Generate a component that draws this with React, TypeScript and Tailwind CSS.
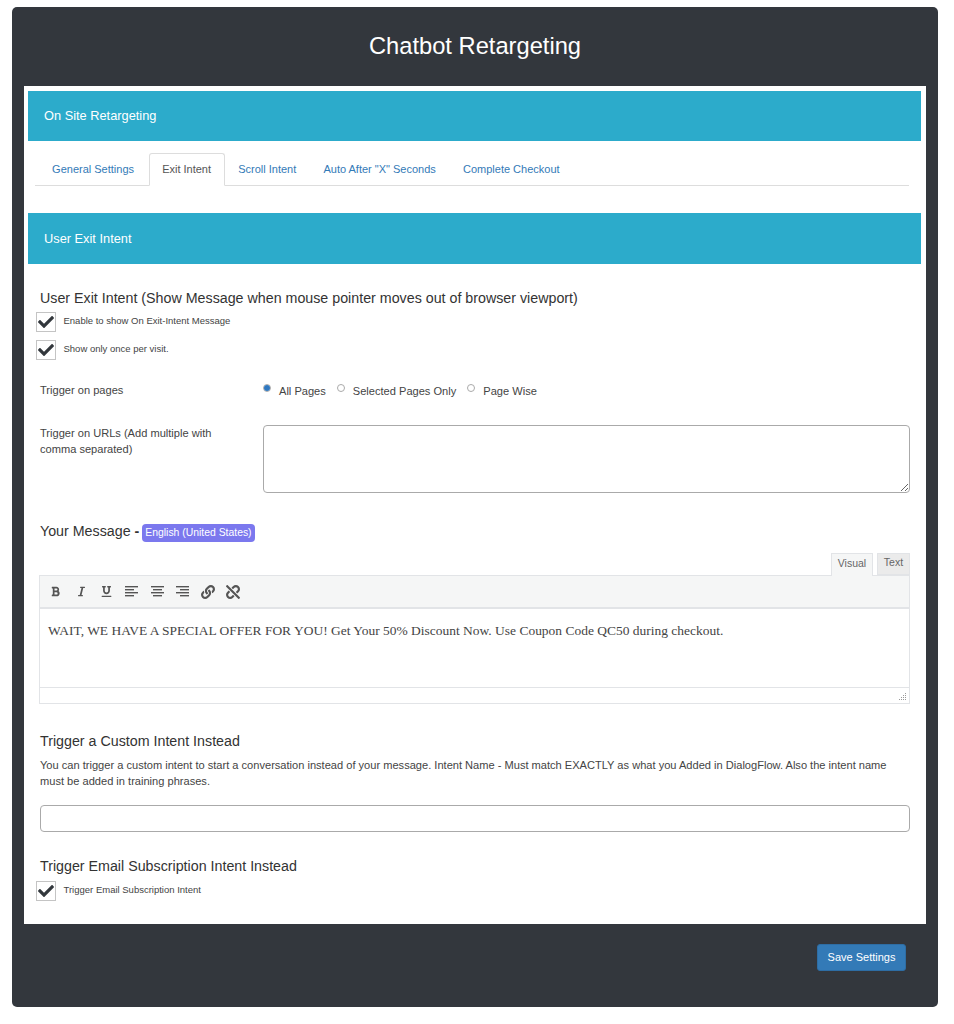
import { FaBold, FaCheck, FaItalic, FaLink, FaUnderline, FaUnlink } from "react-icons/fa";

const tabs = ["General Settings", "Exit Intent", "Scroll Intent", 'Auto After "X" Seconds', "Complete Checkout"];

function Banner({ title, className }: { title: string; className?: string }) {
  return (
    <div className={"flex items-center bg-[#2cabcb] pl-4 text-[12.8px] text-white " + (className ?? "h-[50px]")}>
      {title}
    </div>
  );
}

function Check({ label, className }: { label: string; className?: string }) {
  return (
    <div className={"flex items-start " + (className ?? "")}>
      <span className="flex h-[20px] w-[20px] shrink-0 items-center justify-center border border-[#c4c4c4] bg-white text-[#32373c]">
        <FaCheck size={16} />
      </span>
      <span className="ml-[7.5px] pt-[1.5px] text-[9.5px] leading-[14px] text-[#444]">{label}</span>
    </div>
  );
}

function Radio({ label, checked }: { label: string; checked?: boolean }) {
  return (
    <label className="flex items-start">
      <span className="mt-[2px] flex h-[8px] w-[8px] items-center justify-center rounded-full border border-[#aaa] bg-white">
        {checked && <span className="h-[6px] w-[6px] rounded-full bg-[#2f78c0]" />}
      </span>
      <span className="ml-[8px] pt-[1px] text-[11.08px] leading-[16px] text-[#444]">{label}</span>
    </label>
  );
}

// four bars, long and short in turn, as in the editor's align buttons
function AlignIcon({ align }: { align: "left" | "center" | "right" }) {
  const x = align === "left" ? 0 : align === "center" ? 2 : 4;
  return (
    <svg width="13" height="11" viewBox="0 0 13 11" fill="#555">
      <rect x="0" y="0" width="13" height="1.4" />
      <rect x={x} y="3" width="9" height="1.4" />
      <rect x="0" y="6" width="13" height="1.4" />
      <rect x={x} y="9" width="9" height="1.4" />
    </svg>
  );
}

const toolbar = [
  <FaBold size={11} />,
  <FaItalic size={11} />,
  <FaUnderline size={11} />,
  <AlignIcon align="left" />,
  <AlignIcon align="center" />,
  <AlignIcon align="right" />,
  <FaLink size={14} />,
  <FaUnlink size={14} />,
];

export default function App() {
  return (
    <div className="min-h-[1024px] bg-white pt-[7px] pl-[12px] font-['Liberation_Sans',Arial,sans-serif]">
      <div className="h-[1000px] w-[926px] rounded-[5px] bg-[#33373d] px-[12px]">
        <h1 className="flex h-[79px] items-center justify-center text-[23.7px] text-white">Chatbot Retargeting</h1>

        <div className="h-[838px] bg-white px-[4px] pt-[5px] pr-[5px]">
          <Banner title="On Site Retargeting" />

          <div className="mt-[12px] mr-[12px] ml-[7px] flex h-[33px] border-b border-[#ddd] pl-[3.5px] text-[11px]">
            {tabs.map((t) =>
              t === "Exit Intent" ? (
                <span key={t} className="-mb-px ml-[1px] flex h-[33px] items-center rounded-t-[3px] border border-[#ddd] border-b-white bg-white px-[12.5px] text-[#555]">
                  {t}
                </span>
              ) : (
                <span key={t} className="flex items-center px-[13.6px] pt-[1px] text-[#337ab7]">
                  {t}
                </span>
              ),
            )}
          </div>

          <Banner title="User Exit Intent" className="mt-[27px] h-[51px]" />

          <div className="pr-[11px] pl-[8px]">
            <h2 className="mt-[25px] pl-[4px] text-[14.25px] leading-[18px] text-[#333]">
              User Exit Intent (Show Message when mouse pointer moves out of browser viewport)
            </h2>
            <Check label="Enable to show On Exit-Intent Message" className="mt-[5px]" />
            <Check label="Show only once per visit." className="mt-[8px]" />

            <div className="mt-[22px] flex">
              <span className="w-[227px] pl-[4px] text-[11.08px] leading-[16px] text-[#444]">Trigger on pages</span>
              <div className="flex gap-[11px]">
                <Radio label="All Pages" checked />
                <Radio label="Selected Pages Only" />
                <Radio label="Page Wise" />
              </div>
            </div>

            <div className="mt-[26px] flex">
              <span className="w-[227px] pr-[40px] pl-[4px] text-[11.08px] leading-[16px] text-[#444]">
                Trigger on URLs (Add multiple with comma separated)
              </span>
              <textarea className="h-[68px] flex-1 rounded-[4px] border border-[#aaa] bg-white" />
            </div>

            <div className="mt-[28px] flex items-center pl-[4px]">
              <span className="pb-[2px] text-[14.25px] text-[#333]">
                Your Message <b>-</b>
              </span>
              <span className="ml-[3px] rounded-[4px] bg-[#7b78ee] px-[3px] py-[1px] text-[10.4px] leading-[16px] text-white">
                English (United States)
              </span>
            </div>

            <div className="mt-[9px] ml-[3px]">
              <div className="flex h-[22px] justify-end gap-[4px] text-[10.5px] text-[#666]">
                <span className="-mb-px flex w-[42px] items-center justify-center border border-b-0 border-[#e2e4e7] bg-[#f5f6f6] pb-[4px]">Visual</span>
                <span className="flex w-[33px] items-center justify-center border border-[#e2e4e7] bg-[#ebebeb] pb-[4px]">Text</span>
              </div>
              <div className="border border-[#e2e4e7]">
                <div className="flex h-[33px] items-center gap-[9.4px] border-b-2 border-[#e2e4e7] bg-[#f5f6f6] pl-[7.7px] text-[#555]">
                  {toolbar.map((icon, i) => (
                    <span key={i} className="flex w-[16px] items-center justify-center">
                      {icon}
                    </span>
                  ))}
                </div>
                <div className="h-[79px] border-b border-[#e2e4e7] px-[8px] pt-[13px] font-['Liberation_Serif',serif] text-[13.47px] leading-[18px] text-[#444]">
                  WAIT, WE HAVE A SPECIAL OFFER FOR YOU! Get Your 50% Discount Now. Use Coupon Code QC50 during checkout.
                </div>
                <div className="flex h-[15px] items-end justify-end pr-[2px] pb-[2px]">
                  <svg width="8" height="8" viewBox="0 0 8 8" fill="#999">
                    <rect x="6" y="0" width="1" height="1" />
                    <rect x="4" y="2" width="1" height="1" />
                    <rect x="6" y="2" width="1" height="1" />
                    <rect x="2" y="4" width="1" height="1" />
                    <rect x="4" y="4" width="1" height="1" />
                    <rect x="6" y="4" width="1" height="1" />
                    <rect x="0" y="6" width="1" height="1" />
                    <rect x="2" y="6" width="1" height="1" />
                    <rect x="4" y="6" width="1" height="1" />
                    <rect x="6" y="6" width="1" height="1" />
                  </svg>
                </div>
              </div>
            </div>

            <h2 className="mt-[28px] pl-[4px] text-[14.25px] leading-[18px] text-[#333]">Trigger a Custom Intent Instead</h2>
            <p className="mt-[7px] pr-[20px] pl-[4px] text-[11.08px] leading-[16px] text-[#444]">
              You can trigger a custom intent to start a conversation instead of your message. Intent Name - Must match EXACTLY as what you Added in DialogFlow. Also the intent name must be added in training phrases.
            </p>
            <input className="mt-[16px] ml-[4px] block h-[27px] w-[870px] rounded-[4px] border border-[#aaa] bg-white" />

            <h2 className="mt-[25px] pl-[4px] text-[14.25px] leading-[18px] text-[#333]">Trigger Email Subscription Intent Instead</h2>
            <Check label="Trigger Email Subscription Intent" className="mt-[6px]" />
          </div>
        </div>

        <div className="flex justify-end pt-[20px] pr-[20px]">
          <button className="h-[27px] w-[89px] rounded-[3px] border border-[#2e6da4] bg-[#337ab7] text-[11px] text-white">Save Settings</button>
        </div>
      </div>
    </div>
  );
}
